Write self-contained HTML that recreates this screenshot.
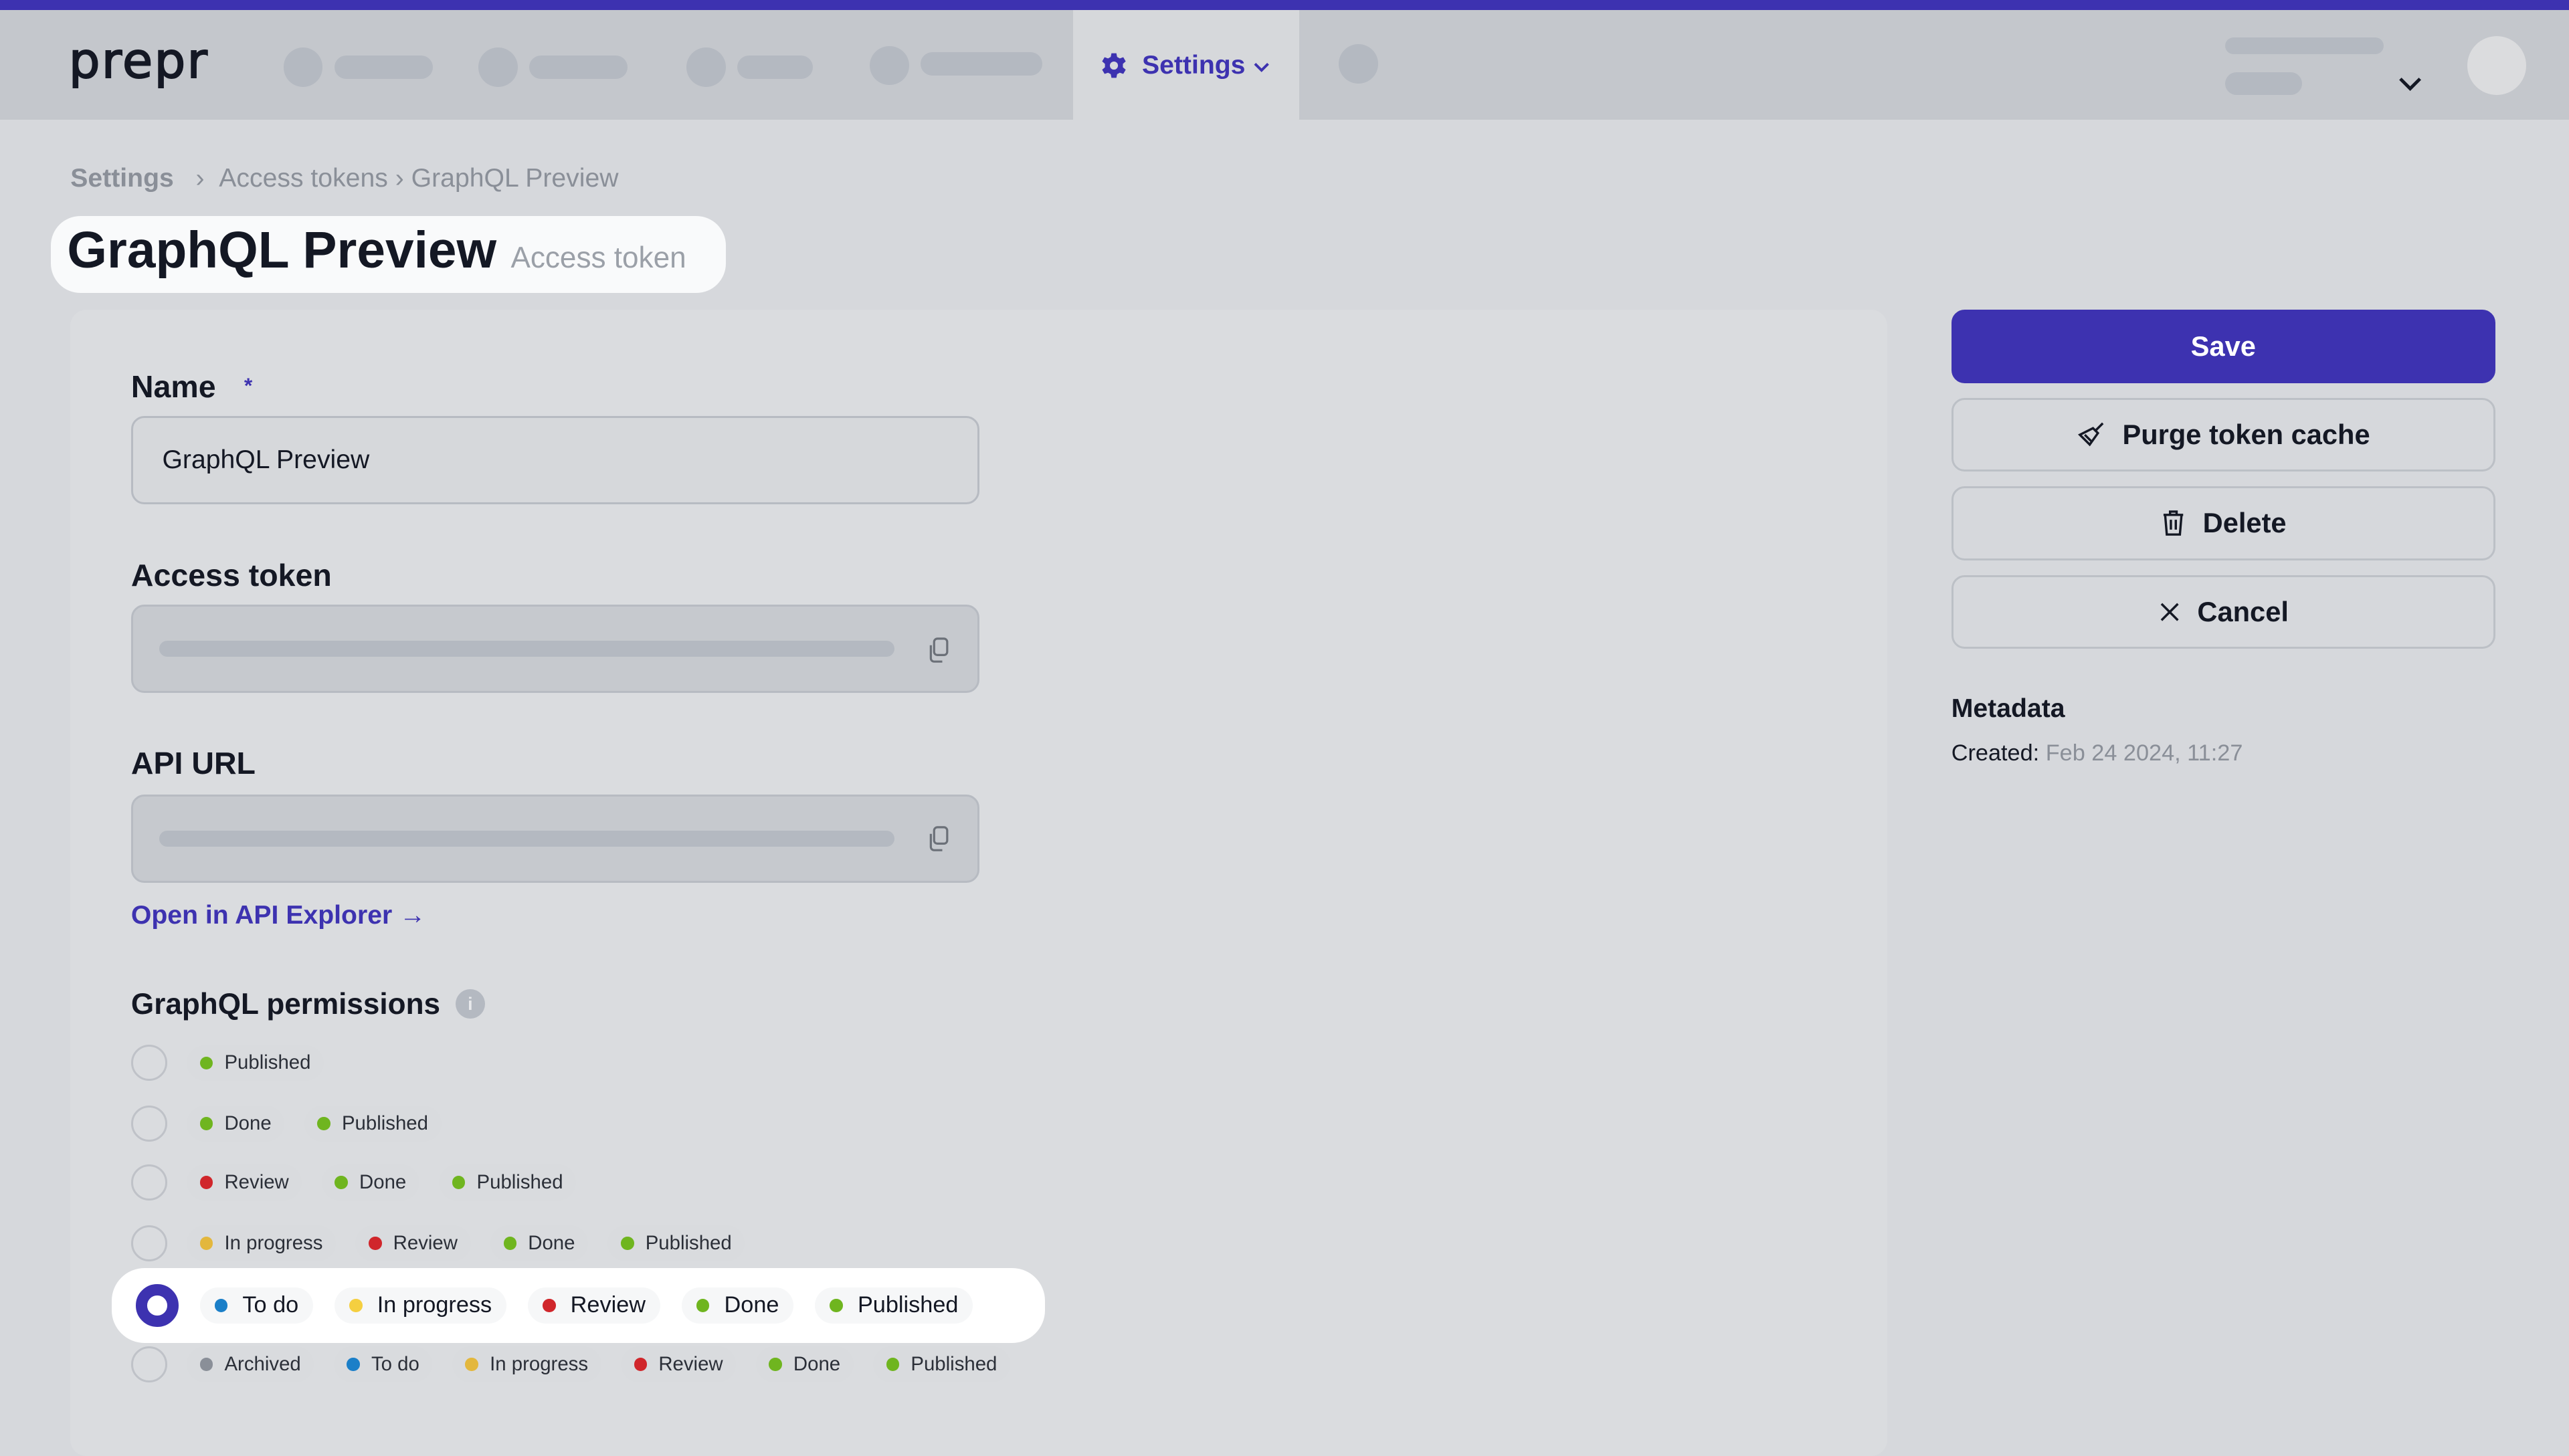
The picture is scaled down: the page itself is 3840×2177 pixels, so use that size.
<!DOCTYPE html>
<html><head><meta charset="utf-8"><style>
*{margin:0;padding:0;box-sizing:border-box}
html,body{width:3840px;height:2124px;overflow:hidden;background:#d6d8dc}
#w{position:absolute;left:0;top:0;width:1568px;height:867px;zoom:2.449;font-family:"Liberation Sans",sans-serif;color:#141824;background:#d6d8dc}
.a{position:absolute}
.sk{position:absolute;background:#b4b9c1;border-radius:10px}
.lab{position:absolute;left:80px;font-size:19px;font-weight:bold}
.inp{position:absolute;left:80px;width:518px;height:54px;border:1.5px solid #b7bbc2;border-radius:8px}
.btn{position:absolute;left:1191px;width:332px;height:45px;border:1.5px solid #bcc0c6;border-radius:8px;display:flex;align-items:center;justify-content:center;font-size:17px;font-weight:bold;gap:10px}
.row{position:absolute;left:80px;display:flex;align-items:center;gap:12px;font-size:12px;color:#2b2f38}
.rad{width:22px;height:22px;border-radius:50%;border:1.5px solid #bfc2c8;margin-right:0}
.tag{display:flex;align-items:center;gap:7px;padding:4px 8px;border-radius:12px;background:#d9dbde}
.d{width:8px;height:8px;border-radius:50%}
.g{background:#6fb51f}.r{background:#d0262b}.y{background:#e3b73d}.b{background:#1b7fc8}.k{background:#8a8f98}
.hl .tag{background:#f6f7f8;padding:3px 9px;gap:9px}
</style></head><body><div id="w">
<div class="a" style="left:0;top:0;width:1568px;height:6px;background:#3d32b0"></div>
<div class="a" style="left:0;top:6px;width:1568px;height:67px;background:#c4c7cc"></div>
<div class="a" style="left:655px;top:6px;width:138px;height:67px;background:#d6d8db"></div>
<div class="a" style="left:42px;top:20px;font-size:30px;letter-spacing:1px;color:#141824;font-family:'DejaVu Sans',sans-serif;-webkit-text-stroke:0.8px #141824">prepr</div>
<div class="sk" style="left:173px;top:29px;width:24px;height:24px;border-radius:50%"></div>
<div class="sk" style="left:204px;top:34px;width:60px;height:14px"></div>
<div class="sk" style="left:292px;top:29px;width:24px;height:24px;border-radius:50%"></div>
<div class="sk" style="left:323px;top:34px;width:60px;height:14px"></div>
<div class="sk" style="left:419px;top:29px;width:24px;height:24px;border-radius:50%"></div>
<div class="sk" style="left:450px;top:34px;width:46px;height:14px"></div>
<div class="sk" style="left:531px;top:28px;width:24px;height:24px;border-radius:50%"></div>
<div class="sk" style="left:562px;top:32px;width:74px;height:14px"></div>
<div class="sk" style="left:817px;top:27px;width:24px;height:24px;border-radius:50%"></div>
<svg class="a" style="left:671px;top:31px" width="18" height="18" viewBox="0 0 24 24"><path fill="#3d32b0" d="M10 2h4l.6 3 2.2 1.2 2.8-1 2 3.4-2.3 2v2.8l2.3 2-2 3.4-2.8-1-2.2 1.2-.6 3h-4l-.6-3-2.2-1.2-2.8 1-2-3.4 2.3-2v-2.8l-2.3-2 2-3.4 2.8 1L9.4 5z"/><circle cx="12" cy="12" r="3.3" fill="#d6d8db"/></svg>
<div class="a" style="left:697px;top:31px;font-size:16px;font-weight:bold;color:#3d32b0">Settings</div>
<svg class="a" style="left:764px;top:36px" width="12" height="10" viewBox="0 0 12 10"><path d="M2 3l4 4 4-4" stroke="#3d32b0" stroke-width="1.6" fill="none"/></svg>
<div class="sk" style="left:1358px;top:23px;width:97px;height:10px"></div>
<div class="sk" style="left:1358px;top:44px;width:47px;height:14px"></div>
<svg class="a" style="left:1463px;top:44px" width="16" height="14" viewBox="0 0 16 14"><path d="M2 4l6 6 6-6" stroke="#141824" stroke-width="2" fill="none"/></svg>
<div class="a" style="left:1506px;top:22px;width:36px;height:36px;border-radius:50%;background:#dbdcde"></div>

<div class="a" style="left:43px;top:100px;font-size:16px;color:#8a8f98"><span style="font-weight:bold">Settings</span>&nbsp;&nbsp;&nbsp;›&nbsp;&nbsp;Access tokens&nbsp;›&nbsp;GraphQL Preview</div>
<div class="a" style="left:31px;top:132px;width:412px;height:47px;background:#f9fafb;border-radius:18px"></div>
<div class="a" style="left:41px;top:135px;font-size:31.3px;font-weight:bold;white-space:nowrap">GraphQL Preview <span style="font-size:18px;font-weight:normal;color:#9ba0a8">Access token</span></div>

<div class="a" style="left:43px;top:189px;width:1109px;height:700px;background:#dadcdf;border-radius:10px"></div>
<div class="lab" style="top:225px">Name <span style="color:#3d32b0;font-size:13px;margin-left:12px;vertical-align:3px">*</span></div>
<div class="inp" style="top:254px;background:#d6d8db"></div>
<div class="a" style="left:99px;top:272px;font-size:16px">GraphQL Preview</div>
<div class="lab" style="top:340px">Access token</div>
<div class="inp" style="top:369px;background:#c6c9ce"></div>
<div class="sk" style="left:97px;top:391px;width:449px;height:10px"></div>
<div class="lab" style="top:455px">API URL</div>
<div class="inp" style="top:485px;background:#c6c9ce"></div>
<div class="sk" style="left:97px;top:507px;width:449px;height:10px"></div>
<svg class="a" style="left:565px;top:388px" width="16" height="18" viewBox="0 0 16 18"><rect x="5" y="2" width="8" height="10" rx="2" fill="none" stroke="#6b7078" stroke-width="1.3"/><path d="M3 6v8a2 2 0 002 2h5" fill="none" stroke="#6b7078" stroke-width="1.3"/></svg>
<svg class="a" style="left:565px;top:503px" width="16" height="18" viewBox="0 0 16 18"><rect x="5" y="2" width="8" height="10" rx="2" fill="none" stroke="#6b7078" stroke-width="1.3"/><path d="M3 6v8a2 2 0 002 2h5" fill="none" stroke="#6b7078" stroke-width="1.3"/></svg>
<div class="a" style="left:80px;top:550px;font-size:16px;font-weight:bold;color:#3d32b0">Open in API Explorer →</div>
<div class="lab" style="top:603px;font-size:18px">GraphQL permissions</div>
<div class="a" style="left:278px;top:604px;width:18px;height:18px;border-radius:50%;background:#b4b9c1;color:#e8e9eb;font-size:11px;font-weight:bold;text-align:center;line-height:18px">i</div>

<div class="row" style="top:638px"><div class="rad"></div><div class="tag"><div class="d g"></div>Published</div></div>
<div class="row" style="top:675px"><div class="rad"></div><div class="tag"><div class="d g"></div>Done</div><div class="tag"><div class="d g"></div>Published</div></div>
<div class="row" style="top:711px"><div class="rad"></div><div class="tag"><div class="d r"></div>Review</div><div class="tag"><div class="d g"></div>Done</div><div class="tag"><div class="d g"></div>Published</div></div>
<div class="row" style="top:748px"><div class="rad"></div><div class="tag"><div class="d y"></div>In progress</div><div class="tag"><div class="d r"></div>Review</div><div class="tag"><div class="d g"></div>Done</div><div class="tag"><div class="d g"></div>Published</div></div>
<div class="a" style="left:68px;top:774px;width:570px;height:46px;background:#fff;border-radius:20px"></div>
<div class="row hl" style="left:83px;top:784px;font-size:14px;gap:13px;color:#141824"><div style="width:26px;height:26px;border-radius:50%;border:7px solid #3d32b0;background:#fff;margin-right:0"></div><div class="tag"><div class="d b"></div>To do</div><div class="tag"><div class="d" style="background:#f5cf40"></div>In progress</div><div class="tag"><div class="d r"></div>Review</div><div class="tag"><div class="d g"></div>Done</div><div class="tag"><div class="d g"></div>Published</div></div>
<div class="row" style="top:822px"><div class="rad"></div><div class="tag"><div class="d k"></div>Archived</div><div class="tag"><div class="d b"></div>To do</div><div class="tag"><div class="d y"></div>In progress</div><div class="tag"><div class="d r"></div>Review</div><div class="tag"><div class="d g"></div>Done</div><div class="tag"><div class="d g"></div>Published</div></div>

<div class="btn" style="top:189px;background:#3d32b0;border-color:#3d32b0;color:#fff">Save</div>
<div class="btn" style="top:243px"><svg width="18" height="18" viewBox="0 0 18 18"><path d="M16 2l-5 5M10 5l3 3-5 7-6-6z M5 9l4 4" fill="none" stroke="#141824" stroke-width="1.4"/></svg>Purge token cache</div>
<div class="btn" style="top:297px"><svg width="16" height="18" viewBox="0 0 16 18"><path d="M2 4h12M6 4V2h4v2M3 4l1 12h8l1-12M6.5 7v6M9.5 7v6" fill="none" stroke="#141824" stroke-width="1.4"/></svg>Delete</div>
<div class="btn" style="top:351px"><svg width="14" height="14" viewBox="0 0 14 14"><path d="M2 2l10 10M12 2L2 12" stroke="#141824" stroke-width="1.4"/></svg>Cancel</div>
<div class="a" style="left:1191px;top:424px;font-size:16px;font-weight:bold">Metadata</div>
<div class="a" style="left:1191px;top:452px;font-size:14px">Created: <span style="color:#8a8f98">Feb 24 2024, 11:27</span></div>
</div></body></html>
